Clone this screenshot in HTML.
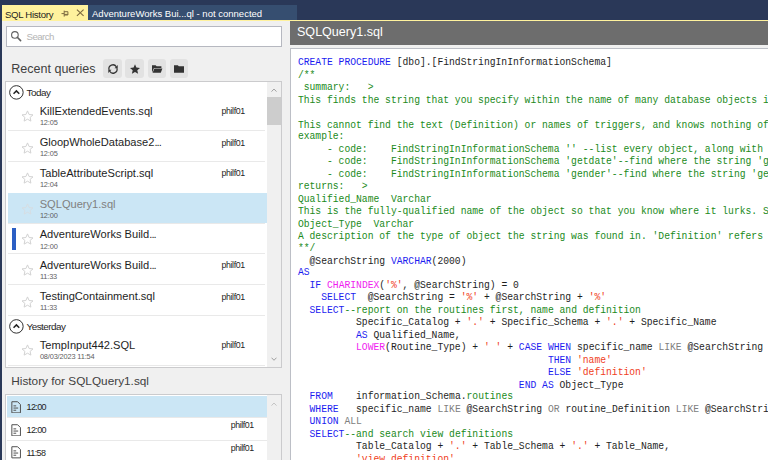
<!DOCTYPE html>
<html><head><meta charset="utf-8">
<style>
*{box-sizing:border-box;margin:0;padding:0}
html,body{width:768px;height:460px;overflow:hidden;background:#2a3858;font-family:"Liberation Sans",sans-serif;}
.abs{position:absolute}
#root{position:relative;width:768px;height:460px;overflow:hidden;background:#2a3858}
#tab1{left:2px;top:4.8px;width:86px;height:16px;background:#fff29d}
#tab1 span{position:absolute;left:2.9px;top:4px;font-size:9.6px;line-height:11px;color:#1e1e1e;letter-spacing:-0.28px;white-space:nowrap}
#tab2{left:88px;top:4.8px;width:209px;height:15.5px;background:#364e70}
#tab2 span{position:absolute;left:4px;top:3.6px;font-size:9.52px;line-height:11px;color:#fff;white-space:nowrap}
#yl{left:2px;top:19.8px;width:766px;height:1.4px;background:#fff29d}
#panel{left:2px;top:21.1px;width:766px;height:439px;background:#f0f0f0}
#search{left:5.7px;top:26.2px;width:276px;height:21.1px;background:#fff;border:1px solid #b6b8c0}
#search span{position:absolute;left:19.8px;top:3.2px;font-size:9.7px;color:#b4b4b4;line-height:13px;letter-spacing:-0.55px}
#search svg{position:absolute;left:3.2px;top:3.1px;width:12px;height:12px}
#hdr{left:290px;top:21.1px;width:478px;height:24.3px;background:#6d6d6d}
#hdr span{position:absolute;left:7px;top:4px;color:#fff;font-size:12.56px;line-height:15px;white-space:nowrap}
#code{left:290px;top:48px;width:480px;height:420px;background:#fff;border:1px solid #bcbfc6}
#code pre{position:absolute;left:6.9px;top:7.72px;font-family:"Liberation Mono",monospace;font-size:9.7px;line-height:11.904px;color:#1e1e1e;white-space:pre;transform:scale(1,1.04);transform-origin:0 0}
.k{color:#1c1cf0}.c{color:#1a8a1a}.s{color:#f0401c}.f{color:#f01cf0}.g{color:#808080}
#rq{left:11.3px;top:61.1px;font-size:12.52px;line-height:16px;color:#404040;white-space:nowrap}
.btn{top:59.25px;width:18.7px;height:18.5px;background:#e2e2e2;border-radius:3px}
.btn svg{position:absolute;left:3.6px;top:3.25px;width:12px;height:12px}
#list1{left:5.2px;top:81px;width:277px;height:287.2px;background:#fff;border:1px solid #cbcbcd;overflow:hidden}
#list2{left:5.2px;top:394px;width:277px;height:80px;background:#fff;border:1px solid #cbcbcd;overflow:hidden}
.grp{position:absolute;left:0;width:262px;height:18px}
.grp .circ{position:absolute;left:2.6px;top:3.2px;width:14.8px;height:14.8px;border:1.1px solid #222;border-radius:50%}
.grp svg{position:absolute;left:2.6px;top:3.2px;width:14.8px;height:14.8px}
.grp .t{position:absolute;left:20.3px;top:5px;font-size:9.9px;line-height:12px;color:#1e1e1e;letter-spacing:-0.5px}
.row{position:absolute;left:2px;width:257px;height:30.8px;border-top:1px solid #e9e9e9}
.row .n{position:absolute;left:31.5px;top:5px;font-size:11.1px;line-height:13px;color:#1e1e1e;white-space:nowrap}
.row .d{position:absolute;left:31.7px;top:18.2px;font-size:7.4px;line-height:9px;color:#606060;white-space:nowrap;letter-spacing:-0.15px}
.row .u{position:absolute;left:213.4px;top:6.3px;font-size:8.8px;line-height:10px;color:#1e1e1e;white-space:nowrap;letter-spacing:-0.4px}
.row svg.star{position:absolute;left:13.3px;top:10.4px;width:13px;height:12px}
.row.sel{background:#cbe6f5;border-top-color:#cbe6f5}
.row.sel .n{color:#808080}
.sb{position:absolute;right:0.6px;top:0;width:13.4px;height:100%;background:#f0f0f0}
.sb .th{position:absolute;left:0;width:100%;background:#cdcdcd}
.sb svg{position:absolute;left:4px;width:6px;height:4.3px}
#h2{left:11.3px;top:373.6px;font-size:11.8px;line-height:14px;color:#404040;white-space:nowrap}
.hrow{position:absolute;left:1px;width:260px;height:22.9px;border-bottom:1px solid #e9e9e9}
.hrow .tm{position:absolute;left:19.4px;top:6.4px;font-size:9px;line-height:10px;color:#1e1e1e;letter-spacing:-0.62px}
.hrow .u{position:absolute;left:223.5px;top:1.9px;font-size:8.8px;line-height:10px;color:#1e1e1e;letter-spacing:-0.4px}
.hrow svg{position:absolute;left:4.1px;top:5px;width:10.4px;height:12.6px}
</style></head><body>
<div id="root">
<div id="tab2" class="abs"><span>AdventureWorks Bui...ql - not connected</span></div>
<div id="yl" class="abs"></div>
<div id="tab1" class="abs"><span>SQL History</span>
 <svg class="abs" style="left:59.3px;top:4.9px;width:10px;height:8px" viewBox="0 0 10 8"><path d="M0.5 3.6H3M3.2 0.6V6.6M3.2 1.7H6.9V5H3.2M3.2 4.4H6.9" fill="none" stroke="#7d6b40" stroke-width="1"/></svg>
 <svg class="abs" style="left:74px;top:4.3px;width:9px;height:8px" viewBox="0 0 9 8"><path d="M0.9 0.7L7.6 6.9M7.6 0.7L0.9 6.9" fill="none" stroke="#7d6b40" stroke-width="1.15"/></svg>
</div>
<div id="panel" class="abs"></div>
<div id="search" class="abs"><svg viewBox="0 0 12 12"><circle cx="4.9" cy="4.9" r="3.3" fill="none" stroke="#606060" stroke-width="1.1"/><path d="M7.3 7.3L10.6 10.6" stroke="#606060" stroke-width="1.6" stroke-linecap="round"/></svg><span>Search</span></div>
<div id="rq" class="abs">Recent queries</div>
<div class="abs btn" style="left:103px"><svg viewBox="0 0 12 12"><path d="M2.1 6.9A3.95 3.95 0 0 1 9.3 3.8M9.9 5.1A3.95 3.95 0 0 1 2.7 8.2" fill="none" stroke="#333" stroke-width="1.25"/><path d="M10.7 2V5.2H7.5ZM1.3 10V6.8H4.5Z" fill="#333"/></svg></div>
<div class="abs btn" style="left:125.3px"><svg viewBox="0 0 12 12"><path d="M6 1.2L7.4 4.6L11 4.9L8.3 7.2L9.1 10.8L6 8.9L2.9 10.8L3.7 7.2L1 4.9L4.6 4.6Z" fill="#333"/></svg></div>
<div class="abs btn" style="left:147.7px"><svg viewBox="0 0 12 12"><path d="M1 2.2H4.6L5.6 3.3H10.4V5H3L1 9.6ZM3.4 5.6H11.4L9.8 9.8H1.6Z" fill="#333"/></svg></div>
<div class="abs btn" style="left:169.8px"><svg viewBox="0 0 12 12"><path d="M1 2.2H4.8L5.8 3.3H11V9.8H1Z" fill="#333"/></svg></div>
<div id="list1" class="abs">
  <div class="grp" style="top:0"><svg viewBox="0 0 15 15"><circle cx="7.5" cy="7.5" r="6.85" fill="none" stroke="#222" stroke-width="0.95"/><path d="M4.6 8.9L7.5 6L10.4 8.9" fill="none" stroke="#222" stroke-width="1.5"/></svg><div class="t">Today</div></div>
  <div class="row" style="top:17.5px;border-top:none"><svg class="star" viewBox="0 0 13 12"><path d="M6.5 0.9L8.1 4.5L12 4.9L9.1 7.4L9.9 11.1L6.5 9.2L3.1 11.1L3.9 7.4L1 4.9L4.9 4.5Z" fill="none" stroke="#d2d2d2" stroke-width="1"/></svg><div class="n">KillExtendedEvents.sql</div><div class="d">12:05</div><div class="u">philf01</div></div>
  <div class="row" style="top:48.3px"><svg class="star" viewBox="0 0 13 12"><path d="M6.5 0.9L8.1 4.5L12 4.9L9.1 7.4L9.9 11.1L6.5 9.2L3.1 11.1L3.9 7.4L1 4.9L4.9 4.5Z" fill="none" stroke="#d2d2d2" stroke-width="1"/></svg><div class="n">GloopWholeDatabase2<span style="letter-spacing:-0.9px">...</span></div><div class="d">12:05</div><div class="u">philf01</div></div>
  <div class="row" style="top:79.1px"><svg class="star" viewBox="0 0 13 12"><path d="M6.5 0.9L8.1 4.5L12 4.9L9.1 7.4L9.9 11.1L6.5 9.2L3.1 11.1L3.9 7.4L1 4.9L4.9 4.5Z" fill="none" stroke="#d2d2d2" stroke-width="1"/></svg><div class="n">TableAttributeScript.sql</div><div class="d">12:04</div><div class="u">philf01</div></div>
  <div class="row sel" style="top:110.9px;height:30px;width:258.6px"><svg class="star" viewBox="0 0 13 12" style="top:8.9px"><path d="M6.5 0.9L8.1 4.5L12 4.9L9.1 7.4L9.9 11.1L6.5 9.2L3.1 11.1L3.9 7.4L1 4.9L4.9 4.5Z" fill="none" stroke="#d6dde2" stroke-width="1"/></svg><div class="n" style="top:3.7px">SQLQuery1.sql</div><div class="d" style="top:17.2px">12:00</div></div>
  <div class="row" style="top:140.7px"><div class="abs" style="left:3.8px;top:4.4px;width:4px;height:21.9px;background:#2b5fc4"></div><svg class="star" style="top:9.6px" viewBox="0 0 13 12"><path d="M6.5 0.9L8.1 4.5L12 4.9L9.1 7.4L9.9 11.1L6.5 9.2L3.1 11.1L3.9 7.4L1 4.9L4.9 4.5Z" fill="none" stroke="#d2d2d2" stroke-width="1"/></svg><div class="n" style="top:4px">AdventureWorks Build<span style="letter-spacing:-0.9px">...</span></div><div class="d">12:00</div></div>
  <div class="row" style="top:170.5px"><svg class="star" viewBox="0 0 13 12"><path d="M6.5 0.9L8.1 4.5L12 4.9L9.1 7.4L9.9 11.1L6.5 9.2L3.1 11.1L3.9 7.4L1 4.9L4.9 4.5Z" fill="none" stroke="#d2d2d2" stroke-width="1"/></svg><div class="n" style="top:5px">AdventureWorks Build<span style="letter-spacing:-0.9px">...</span></div><div class="d" style="top:18.2px">11:33</div><div class="u">philf01</div></div>
  <div class="row" style="top:202.3px"><svg class="star" viewBox="0 0 13 12"><path d="M6.5 0.9L8.1 4.5L12 4.9L9.1 7.4L9.9 11.1L6.5 9.2L3.1 11.1L3.9 7.4L1 4.9L4.9 4.5Z" fill="none" stroke="#d2d2d2" stroke-width="1"/></svg><div class="n">TestingContainment.sql</div><div class="d">11:33</div><div class="u">philf01</div></div>
  <div class="row" style="top:233.1px;height:1px"></div>
  <div class="grp" style="top:233.8px"><svg viewBox="0 0 15 15"><circle cx="7.5" cy="7.5" r="6.85" fill="none" stroke="#222" stroke-width="0.95"/><path d="M4.6 8.9L7.5 6L10.4 8.9" fill="none" stroke="#222" stroke-width="1.5"/></svg><div class="t">Yesterday</div></div>
  <div class="row" style="top:251.3px;border-top:none"><svg class="star" viewBox="0 0 13 12"><path d="M6.5 0.9L8.1 4.5L12 4.9L9.1 7.4L9.9 11.1L6.5 9.2L3.1 11.1L3.9 7.4L1 4.9L4.9 4.5Z" fill="none" stroke="#d2d2d2" stroke-width="1"/></svg><div class="n" style="top:6.1px">TempInput442.SQL</div><div class="d" style="top:19.2px">08/03/2023 11:54</div><div class="u">philf01</div></div>
  <div class="row" style="top:283.4px;height:1px"></div>
  <div class="sb"><div class="th" style="top:15px;height:28px"></div>
    <svg style="top:5.5px" viewBox="0 0 7 5"><path d="M0.6 4.2L3.5 1.2L6.4 4.2" fill="none" stroke="#9a9a9a" stroke-width="1.1"/></svg>
    <svg style="top:275.4px" viewBox="0 0 7 5"><path d="M0.6 0.8L3.5 3.8L6.4 0.8" fill="none" stroke="#9a9a9a" stroke-width="1.1"/></svg>
  </div>
</div>
<div id="h2" class="abs">History for SQLQuery1.sql</div>
<div id="list2" class="abs">
  <div class="hrow" style="top:0.6px"><div class="abs" style="left:0;top:0.3px;width:100%;height:21.5px;background:#cbe6f5"></div><svg viewBox="0 0 11 13"><path d="M0.9 0.6H7L10 3.6V12.4H0.9Z" fill="none" stroke="#505050" stroke-width="1.05"/><path d="M2.6 5H5.5M2.6 7.3H7.6M2.6 9.6H5.5" stroke="#505050" stroke-width="1.05"/></svg><div class="tm">12:00</div></div>
  <div class="hrow" style="top:23.5px"><svg viewBox="0 0 11 13"><path d="M0.9 0.6H7L10 3.6V12.4H0.9Z" fill="none" stroke="#505050" stroke-width="1.05"/><path d="M2.6 5H5.5M2.6 7.3H7.6M2.6 9.6H5.5" stroke="#505050" stroke-width="1.05"/></svg><div class="tm">12:00</div><div class="u">philf01</div></div>
  <div class="hrow" style="top:46.4px"><svg viewBox="0 0 11 13"><path d="M0.9 0.6H7L10 3.6V12.4H0.9Z" fill="none" stroke="#505050" stroke-width="1.05"/><path d="M2.6 5H5.5M2.6 7.3H7.6M2.6 9.6H5.5" stroke="#505050" stroke-width="1.05"/></svg><div class="tm">11:58</div><div class="u">philf01</div></div>
  <div class="sb"><svg style="top:6.5px" viewBox="0 0 7 5"><path d="M0.6 4.2L3.5 1.2L6.4 4.2" fill="none" stroke="#c0c0c0" stroke-width="1.1"/></svg></div>
</div>
<div id="hdr" class="abs"><span>SQLQuery1.sql</span></div>
<div id="code" class="abs"><pre><span class="k">CREATE PROCEDURE</span> [dbo].[FindStringInInformationSchema]
<span class="c">/**
 summary:   &gt;
This finds the string that you specify within the name of many database objects including
 
This cannot find the text (Definition) or names of triggers, and knows nothing of
example:
     - code:    FindStringInInformationSchema '' --list every object, along with its
     - code:    FindStringInInformationSchema 'getdate'--find where the string 'getdate'
     - code:    FindStringInInformationSchema 'gender'--find where the string 'gender'
returns:   &gt;
Qualified_Name  Varchar
This is the fully-qualified name of the object so that you know where it lurks. Sometimes
Object_Type  Varchar
A description of the type of object the string was found in. 'Definition' refers to
**/</span>
  @SearchString <span class="k">VARCHAR</span>(2000)
<span class="k">AS</span>
  <span class="k">IF</span> <span class="f">CHARINDEX</span>(<span class="s">'%'</span>, @SearchString) = 0
    <span class="k">SELECT</span>  @SearchString = <span class="s">'%'</span> + @SearchString + <span class="s">'%'</span>
  <span class="k">SELECT</span><span class="c">--report on the routines first, name and definition</span>
          Specific_Catalog + <span class="s">'.'</span> + Specific_Schema + <span class="s">'.'</span> + Specific_Name
          <span class="k">AS</span> Qualified_Name,
          <span class="f">LOWER</span>(Routine_Type) + <span class="s">' '</span> + <span class="k">CASE WHEN</span> specific_name <span class="g">LIKE</span> @SearchString
                                           <span class="k">THEN</span> <span class="s">'name'</span>
                                           <span class="k">ELSE</span> <span class="s">'definition'</span>
                                      <span class="k">END AS</span> Object_Type
  <span class="k">FROM</span>    information_Schema.<span class="c">routines</span>
  <span class="k">WHERE</span>   specific_name <span class="g">LIKE</span> @SearchString <span class="g">OR</span> routine_Definition <span class="g">LIKE</span> @SearchString
  <span class="k">UNION</span> <span class="g">ALL</span>
  <span class="k">SELECT</span><span class="c">--and search view definitions</span>
          Table_Catalog + <span class="s">'.'</span> + Table_Schema + <span class="s">'.'</span> + Table_Name,
          <span class="s">'view definition'</span>
</pre></div>
</div>
</body></html>
